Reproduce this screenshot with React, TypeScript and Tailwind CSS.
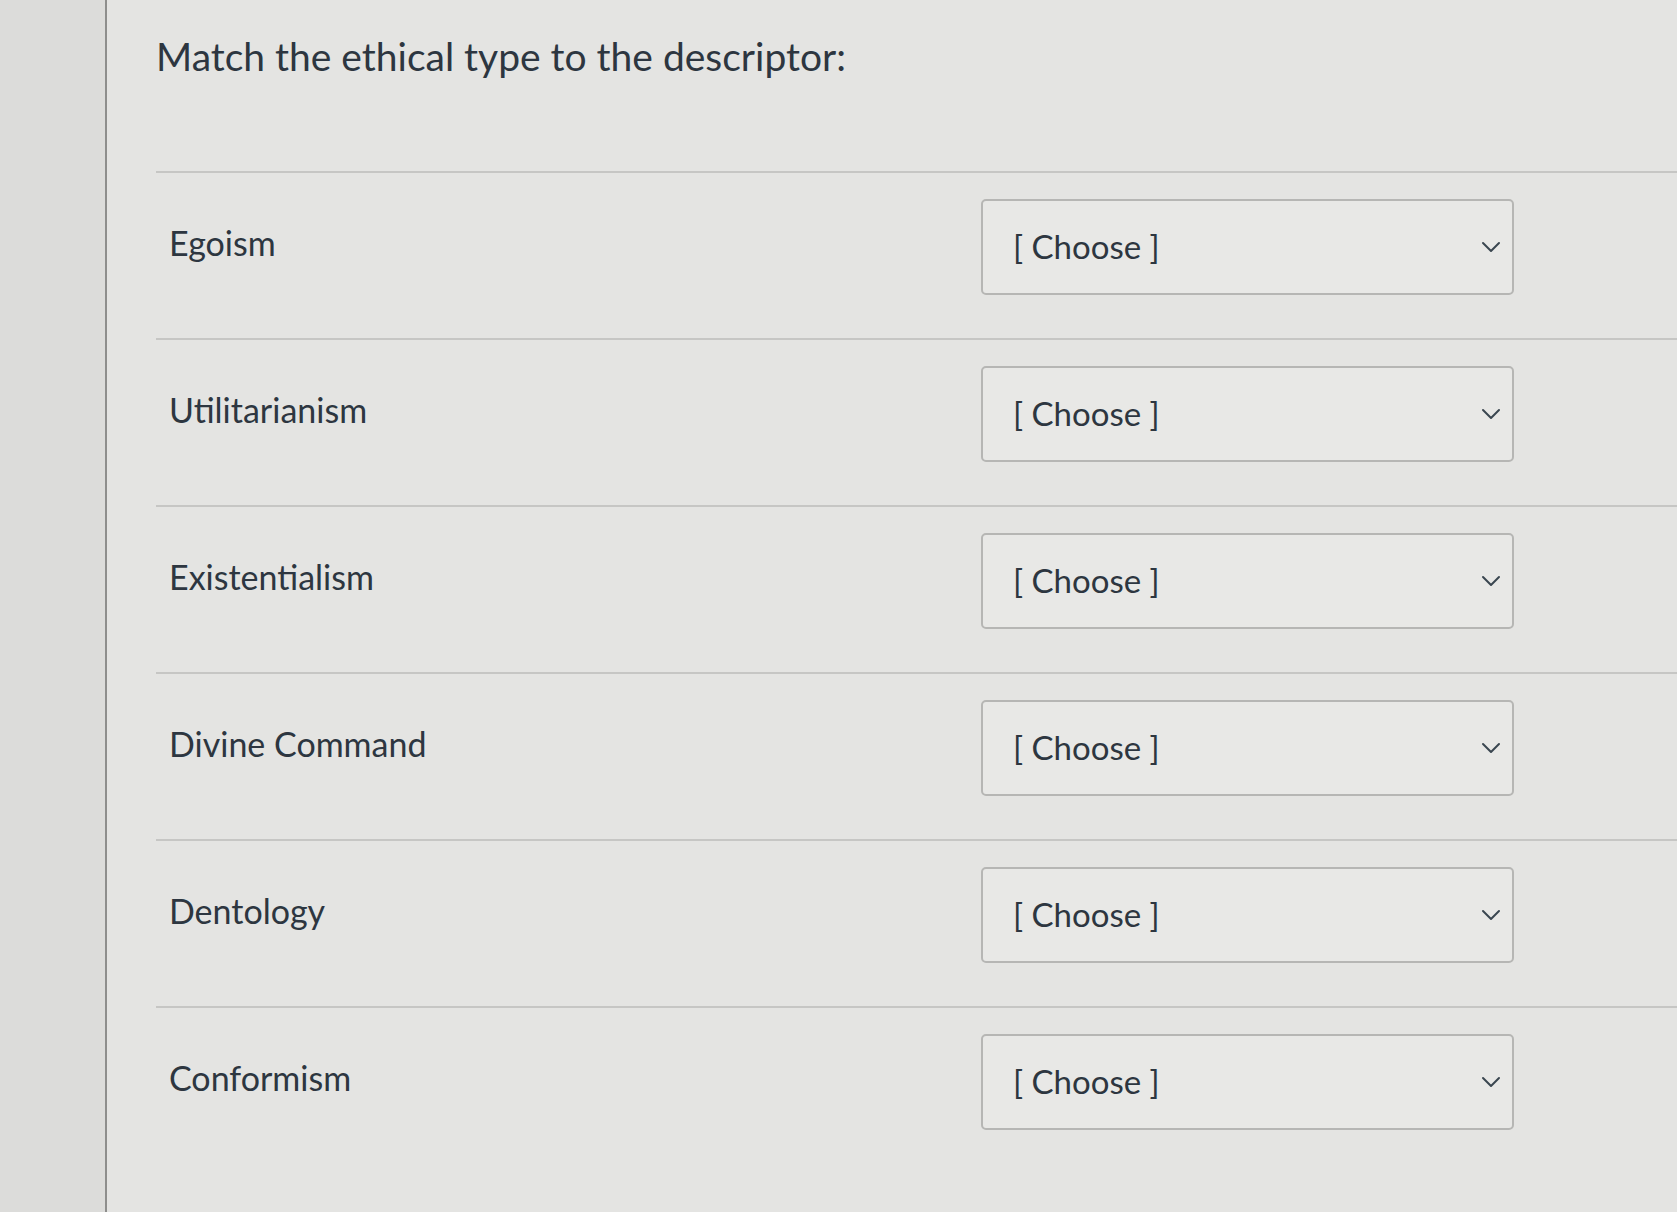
const TYPES = ["Egoism", "Utilitarianism", "Existentialism", "Divine Command", "Dentology", "Conformism"];

function Chevron() {
  return (
    <svg width="22" height="14" viewBox="0 0 22 14" fill="none" className="text-[#3a4650]">
      <path d="M3 3 L11 11 L19 3" stroke="currentColor" strokeWidth="2" strokeLinecap="round" strokeLinejoin="round" />
    </svg>
  );
}

function ChooseBox() {
  return (
    <div className="w-[533px] h-[96px] rounded-[5px] border-2 border-[#b6b6b4] bg-[#e8e8e6] flex items-center justify-between pl-[30px] pr-[10px]">
      <span className="text-[33px] text-[#2d3640]">[ Choose ]</span>
      <Chevron />
    </div>
  );
}

export default function App() {
  return (
    <div className="flex h-[1212px] overflow-hidden bg-[#e4e4e2] font-['Lato','Noto_Sans',sans-serif]">
      <div className="w-[107px] shrink-0 bg-[#dcdcda] border-r-2 border-[#8e8e8c]" />
      <div className="flex-1 pl-[49px]">
        <div className="h-[171px] pt-[31px]">
          <h1 className="text-[39px] leading-[50px] text-[#2d3640]">Match the ethical type to the descriptor:</h1>
        </div>
        {TYPES.map((t) => (
          <div key={t} className="h-[167px] border-t-2 border-[#c6c6c4] flex items-start">
            <div className="w-[825px] pl-[13px] pt-[48px] text-[34px] leading-[44px] text-[#2d3640]">{t}</div>
            <div className="pt-[26px]">
              <ChooseBox />
            </div>
          </div>
        ))}
      </div>
    </div>
  );
}
